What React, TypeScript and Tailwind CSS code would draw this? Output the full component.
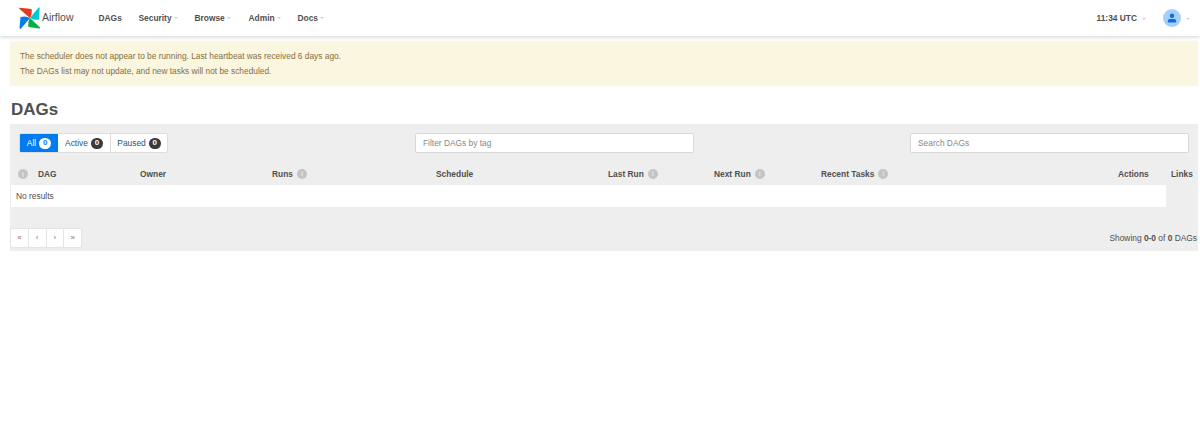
const navItems = [
  { label: 'DAGs', caret: false, cls: 'w-[40px]' },
  { label: 'Security', caret: true, cls: 'w-[56px]' },
  { label: 'Browse', caret: true, cls: 'w-[54px]' },
  { label: 'Admin', caret: true, cls: 'w-[49px]' },
  { label: 'Docs', caret: true, cls: 'w-[40px]' },
]

function Caret() {
  return <span className="ml-[2px] mt-[1px] h-0 w-0 border-x-[2.5px] border-t-[2.5px] border-x-transparent border-t-[#d5ccd5]" />
}

function Logo() {
  return (
    <svg width="22" height="22" viewBox="0 0 22 22" className="shrink-0">
      <path d="M11 11 L0.3 1.8 Q0 0.8 1 0.8 L12.5 2 Q13.5 7 11 11Z" fill="#e43921" />
      <path d="M11 11 L19.6 0.4 Q20.6 0 20.6 1 L20 12.5 Q15 13.5 11 11Z" fill="#00c7d4" />
      <path d="M11 11 L21 20.4 Q21.4 21.4 20.4 21.4 L9.5 20 Q8.6 15 11 11Z" fill="#00ad46" />
      <path d="M11 11 L1.8 21.7 Q0.6 22 0.5 21 L1.5 10 Q7 8.6 11 11Z" fill="#017cee" />
    </svg>
  )
}

function Info() {
  return (
    <span className="ml-1 flex h-[10px] w-[10px] items-center justify-center rounded-full bg-[#c4c4c4] text-[7px] font-bold leading-none text-[#e4e4e4]">
      i
    </span>
  )
}

function Count({ dark }: { dark: boolean }) {
  return (
    <span
      className={
        dark
          ? 'ml-[3px] flex h-[11px] w-[12px] items-center justify-center rounded-full bg-[#3a3a3a] text-[8px] font-bold text-white'
          : 'ml-[3px] flex h-[11px] w-[12px] items-center justify-center rounded-full bg-white text-[8px] font-bold text-[#017cee]'
      }
    >
      0
    </span>
  )
}

export default function App() {
  return (
    <div className="min-h-[429px] bg-white font-['Liberation_Sans',sans-serif] text-[#51504f]">
      <nav className="flex h-9 items-center pl-[19px] pr-[10px] shadow-[0_1px_4px_rgba(0,0,0,0.18)]">
        <Logo />
        <span className="ml-[1px] text-[10.5px] text-[#51504f]">Airflow</span>
        <div className="ml-[25px] flex items-center text-[8.4px] font-bold">
          {navItems.map((item) => (
            <div key={item.label} className={`flex items-center ${item.cls}`}>
              {item.label}
              {item.caret && <Caret />}
            </div>
          ))}
        </div>
        <div className="ml-auto flex items-center text-[8.4px] font-bold">
          11:34 UTC
          <span className="ml-[3px] flex items-center"><Caret /></span>
          <span className="ml-[17px] flex h-[18px] w-[18px] items-center justify-center rounded-full bg-[#a5d0fa]">
            <svg width="10" height="10" viewBox="0 0 10 10">
              <circle cx="5" cy="2.7" r="2.2" fill="#0d6ee0" />
              <path d="M0.8 9.5 V8 Q0.8 6 3 6 H7 Q9.2 6 9.2 8 V9.5Z" fill="#0d6ee0" />
            </svg>
          </span>
          <span className="ml-[3px] flex items-center"><Caret /></span>
        </div>
      </nav>

      <div className="pl-[10px] pr-[2px]">
        <div className="mt-[5px] h-[45px] rounded-[2px] bg-[#fbf6e0] pl-[10px] pt-[8px] text-[8.35px] leading-[14.5px] text-[#856f3d]">
          <div>The scheduler does not appear to be running. Last heartbeat was received 6 days ago.</div>
          <div>The DAGs list may not update, and new tasks will not be scheduled.</div>
        </div>

        <h1 className="ml-[1px] mt-[13px] text-[17px] font-bold leading-[22px] text-[#51504f]">DAGs</h1>

        <div className="mt-[3px] h-[127px] bg-[#eeeeee]">
          <div className="flex items-center pl-[9px] pr-[9px] pt-[9px]">
            <div className="flex h-[20px] w-[149px] overflow-hidden rounded-[2px] border border-[#ddd] bg-white text-[8.4px]">
              <div className="flex w-[38px] items-center justify-center bg-[#017cee] text-white">
                All
                <Count dark={false} />
              </div>
              <div className="flex w-[53px] items-center justify-center border-r border-[#ddd] text-[#28527a]">
                Active
                <Count dark />
              </div>
              <div className="flex flex-1 items-center justify-center text-[#28527a]">
                Paused
                <Count dark />
              </div>
            </div>
            <div className="ml-[247px] flex h-[20px] w-[279px] items-center rounded-[2px] border border-[#d8d8d8] bg-white pl-[7px] text-[8.4px] text-[#888]">
              Filter DAGs by tag
            </div>
            <div className="ml-[216px] flex h-[20px] w-[279px] items-center rounded-[2px] border border-[#d8d8d8] bg-white pl-[7px] text-[8.4px] text-[#888]">
              Search DAGs
            </div>
          </div>

          <div className="mt-[10px] flex h-[22px] items-center pl-[8px] text-[8.4px] font-bold">
            <div className="w-[20px]">
              <span className="flex h-[10px] w-[10px] items-center justify-center rounded-full bg-[#c4c4c4] text-[7px] leading-none text-[#e4e4e4]">i</span>
            </div>
            <div className="w-[102px]">DAG</div>
            <div className="w-[132px]">Owner</div>
            <div className="flex w-[164px] items-center">Runs<Info /></div>
            <div className="w-[172px]">Schedule</div>
            <div className="flex w-[106px] items-center">Last Run<Info /></div>
            <div className="flex w-[107px] items-center">Next Run<Info /></div>
            <div className="flex w-[297px] items-center">Recent Tasks<Info /></div>
            <div className="w-[53px]">Actions</div>
            <div className="mt-[1px]">Links</div>
          </div>

          <div className="ml-[1px] flex h-[22px] w-[1155px] items-center bg-white pl-[5px] text-[8.4px] text-[#51504f]">
            No results
          </div>

          <div className="mt-[21px] flex items-center justify-between pr-[1px]">
            <div className="flex h-[20px] w-[72px] rounded-[2px] border border-[#e4e4e4] bg-white text-[8px] text-[#777]">
              <span className="flex flex-1 items-center justify-center border-r border-[#e4e4e4]">«</span>
              <span className="flex flex-1 items-center justify-center border-r border-[#e4e4e4]">‹</span>
              <span className="flex flex-1 items-center justify-center border-r border-[#e4e4e4]">›</span>
              <span className="flex flex-1 items-center justify-center">»</span>
            </div>
            <div className="text-[8.4px] text-[#51504f]">
              Showing <b>0-0</b> of <b>0</b> DAGs
            </div>
          </div>
        </div>
      </div>
    </div>
  )
}
